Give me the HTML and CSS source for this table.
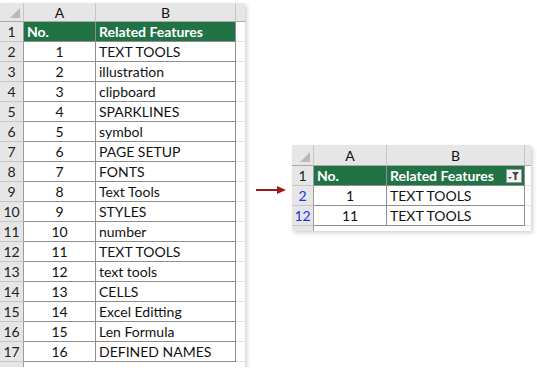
FILE: index.html
```html
<!DOCTYPE html>
<html lang="en">
<head>
    <meta charset="UTF-8">
    <title>Filter rows</title>
    <link rel="stylesheet" href="styles.css">
</head>
<body>
    <div class="page">
        <!-- source sheet -->
        <div class="sheet sheet-left">
            <div class="row head-row">
                <div class="corner"><span class="tri"></span></div>
                <div class="col-head col-a">A</div>
                <div class="col-head col-b">B</div>
                <div class="col-head col-c"></div>
            </div>
            <div class="row title-row">
                <div class="rn">1</div>
                <div class="cell col-a th">No.</div>
                <div class="cell col-b th">Related Features</div>
                <div class="cell col-c blank"></div>
            </div>
            <div class="row"><div class="rn">2</div><div class="cell col-a num">1</div><div class="cell col-b">TEXT TOOLS</div><div class="cell col-c blank"></div></div>
            <div class="row"><div class="rn">3</div><div class="cell col-a num">2</div><div class="cell col-b">illustration</div><div class="cell col-c blank"></div></div>
            <div class="row"><div class="rn">4</div><div class="cell col-a num">3</div><div class="cell col-b">clipboard</div><div class="cell col-c blank"></div></div>
            <div class="row"><div class="rn">5</div><div class="cell col-a num">4</div><div class="cell col-b">SPARKLINES</div><div class="cell col-c blank"></div></div>
            <div class="row"><div class="rn">6</div><div class="cell col-a num">5</div><div class="cell col-b">symbol</div><div class="cell col-c blank"></div></div>
            <div class="row"><div class="rn">7</div><div class="cell col-a num">6</div><div class="cell col-b">PAGE SETUP</div><div class="cell col-c blank"></div></div>
            <div class="row"><div class="rn">8</div><div class="cell col-a num">7</div><div class="cell col-b">FONTS</div><div class="cell col-c blank"></div></div>
            <div class="row"><div class="rn">9</div><div class="cell col-a num">8</div><div class="cell col-b">Text Tools</div><div class="cell col-c blank"></div></div>
            <div class="row"><div class="rn">10</div><div class="cell col-a num">9</div><div class="cell col-b">STYLES</div><div class="cell col-c blank"></div></div>
            <div class="row"><div class="rn">11</div><div class="cell col-a num">10</div><div class="cell col-b">number</div><div class="cell col-c blank"></div></div>
            <div class="row"><div class="rn">12</div><div class="cell col-a num">11</div><div class="cell col-b">TEXT TOOLS</div><div class="cell col-c blank"></div></div>
            <div class="row"><div class="rn">13</div><div class="cell col-a num">12</div><div class="cell col-b">text tools</div><div class="cell col-c blank"></div></div>
            <div class="row"><div class="rn">14</div><div class="cell col-a num">13</div><div class="cell col-b">CELLS</div><div class="cell col-c blank"></div></div>
            <div class="row"><div class="rn">15</div><div class="cell col-a num">14</div><div class="cell col-b">Excel Editting</div><div class="cell col-c blank"></div></div>
            <div class="row"><div class="rn">16</div><div class="cell col-a num">15</div><div class="cell col-b">Len Formula</div><div class="cell col-c blank"></div></div>
            <div class="row"><div class="rn">17</div><div class="cell col-a num">16</div><div class="cell col-b">DEFINED NAMES</div><div class="cell col-c blank"></div></div>
            <div class="row cut-row"><div class="rn"></div><div class="cell col-a blank"></div><div class="cell col-b blank"></div><div class="cell col-c blank"></div></div>
        </div>

        <div class="arrow">
            <svg width="31" height="10" viewBox="0 0 31 10">
                <line x1="0" y1="5" x2="23" y2="5" stroke="#9b1b1b" stroke-width="2"/>
                <polygon points="21,1 30,5 21,9" fill="#9b1b1b"/>
            </svg>
        </div>

        <!-- filtered result -->
        <div class="sheet sheet-right">
            <div class="row head-row">
                <div class="corner"><span class="tri"></span></div>
                <div class="col-head col-a">A</div>
                <div class="col-head col-b">B</div>
                <div class="col-head col-c"></div>
            </div>
            <div class="row title-row">
                <div class="rn">1</div>
                <div class="cell col-a th">No.</div>
                <div class="cell col-b th">Related Features
                    <span class="filter-btn">
                        <svg width="12" height="10" viewBox="0 0 12 10">
                            <polygon points="4,1 11,1 8.5,4 8.5,9 6.5,9 6.5,4" fill="#444"/>
                            <polygon points="0,6 4,6 2,8" fill="#444"/>
                        </svg>
                    </span>
                </div>
                <div class="cell col-c blank"></div>
            </div>
            <div class="row"><div class="rn hit">2</div><div class="cell col-a num">1</div><div class="cell col-b">TEXT TOOLS</div><div class="cell col-c blank"></div></div>
            <div class="row"><div class="rn hit">12</div><div class="cell col-a num">11</div><div class="cell col-b">TEXT TOOLS</div><div class="cell col-c blank"></div></div>
            <div class="row cut-row"><div class="rn"></div><div class="cell col-a blank"></div><div class="cell col-b blank"></div><div class="cell col-c blank"></div></div>
        </div>
    </div>
</body>
</html>
```

FILE: styles.css
```css
:root {
    --green: #217346;
    --head-bg: #e6e6e6;
    --head-line: #c6c6c6;
    --grid-line: #8e8e8e;
    --text: #111;
}

body {
    margin: 0;
    background: #fff;
    font-family: Lato, 'Open Sans', sans-serif;
    font-size: 14px;
    color: var(--text);
}

.page {
    display: flex;
    align-items: flex-start;
}

.sheet {
    display: flex;
    flex-direction: column;
    background: #fff;
    box-shadow: 2px 2px 4px rgba(0, 0, 0, 0.18);
}

.sheet-left {
    margin-top: 3px;
}

.sheet-right {
    margin-top: 145px;
    margin-left: 8px;
}

.row {
    display: flex;
    height: 20px;
}

.row > div {
    box-sizing: border-box;
    height: 100%;
    display: flex;
    align-items: center;
    white-space: nowrap;
}

/* column widths */
.sheet-left .rn, .sheet-left .corner { width: 24px; }
.sheet-left .col-a { width: 72px; }
.sheet-left .col-b { width: 140px; }
.sheet-left .col-c { width: 9px; }

.sheet-right .rn, .sheet-right .corner { width: 22px; }
.sheet-right .col-a { width: 73px; }
.sheet-right .col-b { width: 138px; }
.sheet-right .col-c { width: 6px; }

.head-row {
    height: 19px;
}

.sheet-right .head-row {
    height: 21px;
}

.corner, .col-head {
    background: var(--head-bg);
    border-right: 1px solid var(--head-line);
    border-bottom: 1px solid #a8a8a8;
    justify-content: center;
    position: relative;
}

.col-head.col-c {
    border-right: none;
}

.tri {
    position: absolute;
    right: 3px;
    bottom: 3px;
    width: 0;
    height: 0;
    border-left: 10px solid transparent;
    border-bottom: 10px solid #b9b9b9;
}

.rn {
    background: var(--head-bg);
    border-right: 1px solid #9b9b9b;
    border-bottom: 1px solid var(--head-line);
    justify-content: center;
    color: #222;
}

.rn.hit {
    color: #1a32e6;
}

.cell {
    border-right: 1px solid var(--grid-line);
    border-bottom: 1px solid var(--grid-line);
    padding: 0 3px;
}

.cell.num {
    justify-content: center;
}

.cell.blank {
    border-color: #e2e2e2;
    border-right: none;
}

.th {
    background: var(--green);
    color: #fff;
    font-weight: 700;
    position: relative;
}

.filter-btn {
    position: absolute;
    right: 2px;
    top: 3px;
    width: 14px;
    height: 12px;
    background: #f3f3f3;
    border: 1px solid #9a9a9a;
    display: flex;
    align-items: center;
    justify-content: center;
}

.cut-row {
    height: 5px;
}

.cut-row > div {
    border-bottom: none;
}

.cut-row .cell {
    border-right-color: #e2e2e2;
}

.arrow {
    margin-top: 185px;
    margin-left: 11px;
    line-height: 0;
}

.arrow + .sheet-right {
    margin-left: 5px;
}
```
